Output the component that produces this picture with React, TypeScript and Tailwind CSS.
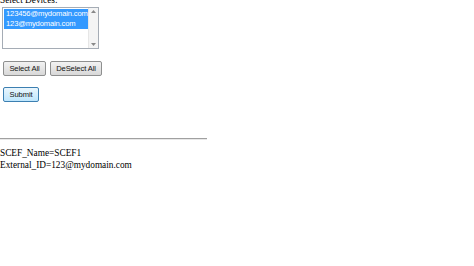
export default function App() {
  const devices = ['123456@mydomain.com', '123@mydomain.com'];

  return (
    <div className="bg-white w-[474px] h-[266px] overflow-hidden font-['Liberation_Serif',serif] text-[9.3px] text-black leading-[12px]">
      <div className="-mt-[6px] h-[13px]">Select Devices:</div>

      {/* device list box */}
      <div className="ml-[2px] w-[97px] h-[42px] border border-[#a5acb5] flex bg-white">
        <div className="flex-1 min-w-0 pt-[1px] pl-[1px] font-['Liberation_Sans',sans-serif] text-[7.6px] tracking-[-0.15px] leading-[10px]">
          {devices.map((d) => (
            <div key={d} className="bg-[#3399ff] text-white pl-[2px] h-[10px] whitespace-nowrap overflow-hidden">
              {d}
            </div>
          ))}
        </div>
        <div className="w-[10px] shrink-0 bg-[#f4f4f4] border-l border-[#e6e6e6] flex flex-col justify-between items-center py-[2px]">
          <svg width="5" height="3" viewBox="0 0 5 3">
            <path d="M0 3 L2.5 0 L5 3 Z" fill="#888" />
          </svg>
          <svg width="5" height="3" viewBox="0 0 5 3">
            <path d="M0 0 L2.5 3 L5 0 Z" fill="#888" />
          </svg>
        </div>
      </div>

      <div className="mt-[12px] ml-[3px] flex gap-[4px] font-['Liberation_Sans',sans-serif] text-[7.6px] tracking-[-0.1px]">
        <button className="w-[43px] h-[15px] whitespace-nowrap border border-[#8e8f8f] rounded-[2px] bg-gradient-to-b from-[#f2f2f2] to-[#d8d8d8] text-[#111] leading-none">
          Select All
        </button>
        <button className="w-[52px] h-[15px] whitespace-nowrap border border-[#8e8f8f] rounded-[2px] bg-gradient-to-b from-[#f2f2f2] to-[#d8d8d8] text-[#111] leading-none">
          DeSelect All
        </button>
      </div>

      <div className="mt-[11px] ml-[3px] font-['Liberation_Sans',sans-serif] text-[7.6px] tracking-[-0.1px]">
        <button className="w-[36px] h-[15px] whitespace-nowrap border border-[#3c7fb1] rounded-[2px] bg-gradient-to-b from-[#eaf6fd] to-[#bee6fd] text-[#111] leading-none">
          Submit
        </button>
      </div>

      <div className="mt-[36px] w-[207px] border-t border-b border-t-[#a0a0a0] border-b-[#e8e8e8] h-0" />

      <div className="mt-[7px]">SCEF_Name=SCEF1</div>
      <div>External_ID=123@mydomain.com</div>
    </div>
  );
}
